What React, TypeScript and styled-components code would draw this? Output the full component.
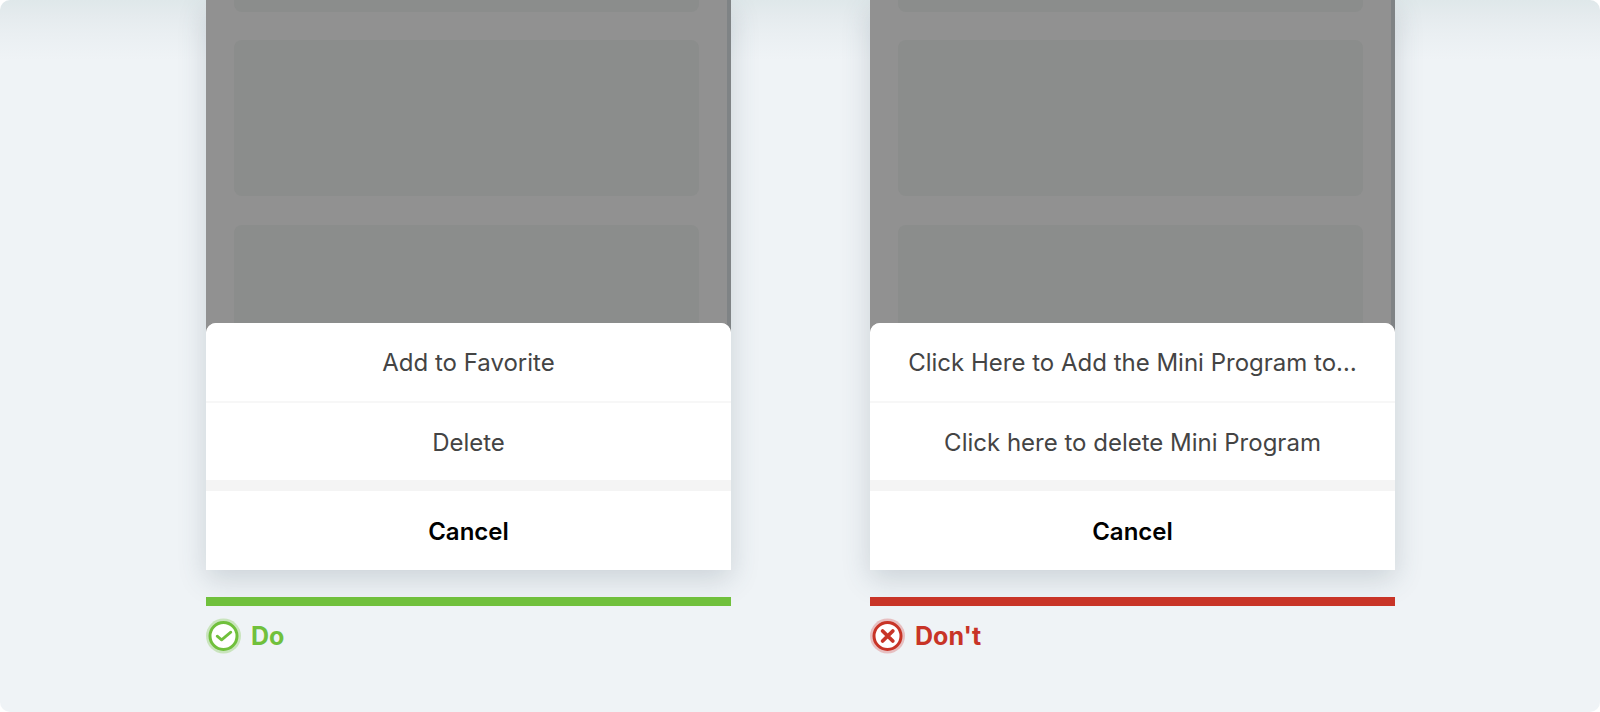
import React from "react";
import styled, { createGlobalStyle } from "styled-components";

const GlobalStyle = createGlobalStyle`
  *, *::before, *::after { box-sizing: border-box; }
  html { background: #ffffff; }
  body {
    margin: 0;
    font-family: Inter, "Liberation Sans", sans-serif;
  }
`;

const Page = styled.main`
  display: grid;
  grid-template-columns: 1fr 1fr;
  column-gap: 139px;
  min-height: 100vh;
  padding: 0 205px 56px 206px;
  overflow: hidden;
  border-radius: 10px;
  background: linear-gradient(#dfe8ea 0, #e5ebee 16px, #eaeff2 34px, #eff3f6 60px);
`;

const Example = styled.figure`
  display: flex;
  flex-direction: column;
  min-width: 0;
  margin: 0;
`;

const Phone = styled.div`
  display: flex;
  flex-direction: column;
  box-shadow: 0 9px 27px rgba(62, 78, 94, 0.2);
`;

const Backdrop = styled.div`
  display: flex;
  flex-direction: column;
  gap: 28px;
  padding: 0 28px;
  border-right: 4px solid #7f8385;
  background: #919191;
`;

const Block = styled.div<{ $cut?: "top" | "bottom" }>`
  height: ${(p) => (p.$cut === "top" ? 12 : p.$cut === "bottom" ? 107 : 156)}px;
  border-radius: ${(p) =>
    p.$cut === "top" ? "0 0 8px 8px" : p.$cut === "bottom" ? "8px 8px 0 0" : "8px"};
  background: #8b8d8c;

  &:last-child { margin-top: 1px; }
`;

const Sheet = styled.div`
  position: relative;
  display: flex;
  flex-direction: column;
  margin-top: -9px;
  overflow: hidden;
  border-radius: 10px 10px 0 0;
  background: #f4f4f4;
`;

const Action = styled.button<{ $cancel?: boolean }>`
  height: ${(p) => (p.$cancel ? 79 : 77)}px;
  margin: ${(p) => (p.$cancel ? "11px 0 0" : "0")};
  padding: 2px 32px 0;
  border: 0;
  background: #ffffff;
  color: ${(p) => (p.$cancel ? "#000000" : "#444444")};
  font-family: inherit;
  font-size: 24px;
  font-weight: ${(p) => (p.$cancel ? 600 : 400)};
  line-height: 32px;
  text-align: center;
  white-space: nowrap;

  &:first-child {
    height: 80px;
    border-bottom: 2px solid #f7f7f7;
  }
`;

const Bar = styled.div<{ $tone: string }>`
  height: 9px;
  margin-top: 27px;
  background: ${(p) => p.$tone};
`;

const Verdict = styled.figcaption<{ $tone: string }>`
  display: flex;
  align-items: center;
  gap: 10px;
  margin-top: 12px;
  color: ${(p) => p.$tone};
  font-size: 25px;
  font-weight: 700;
  line-height: 36px;
`;

const GREEN = "#70c03c";
const RED = "#c83427";

function DoIcon() {
  return (
    <svg width="35" height="36" viewBox="0 0 35 36" aria-hidden="true">
      <circle cx="17.5" cy="18" r="17.5" fill="#c9e4bd" />
      <circle cx="17.5" cy="18" r="13.5" fill="#fff" stroke={GREEN} strokeWidth="3" />
      <path d="M11.2 18.2 L15.6 21.8 L24.8 14.2" fill="none" stroke={GREEN} strokeWidth="2.8" strokeLinecap="round" strokeLinejoin="round" />
    </svg>
  );
}

function DontIcon() {
  return (
    <svg width="35" height="36" viewBox="0 0 35 36" aria-hidden="true">
      <circle cx="17.5" cy="18" r="17.5" fill="#e7bfc1" />
      <circle cx="17.5" cy="18" r="13.5" fill="#fff" stroke={RED} strokeWidth="3" />
      <path d="M12.6 13 L22.8 23 M22.8 13 L12.6 23" fill="none" stroke={RED} strokeWidth="3.8" strokeLinecap="round" />
    </svg>
  );
}

type GuideProps = {
  actions: string[];
  tone: string;
  icon: React.ReactNode;
  verdict: string;
};

function Guide({ actions, tone, icon, verdict }: GuideProps) {
  return (
    <Example>
      <Phone>
        <Backdrop>
          <Block $cut="top" />
          <Block />
          <Block $cut="bottom" />
        </Backdrop>
        <Sheet>
          {actions.map((label) => (
            <Action key={label} type="button">{label}</Action>
          ))}
          <Action type="button" $cancel>Cancel</Action>
        </Sheet>
      </Phone>
      <Bar $tone={tone} />
      <Verdict $tone={tone}>
        {icon}
        {verdict}
      </Verdict>
    </Example>
  );
}

export default function App() {
  return (
    <>
      <GlobalStyle />
      <Page>
        <Guide
          actions={["Add to Favorite", "Delete"]}
          tone={GREEN}
          icon={<DoIcon />}
          verdict="Do"
        />
        <Guide
          actions={["Click Here to Add the Mini Program to…", "Click here to delete Mini Program"]}
          tone={RED}
          icon={<DontIcon />}
          verdict="Don't"
        />
      </Page>
    </>
  );
}
